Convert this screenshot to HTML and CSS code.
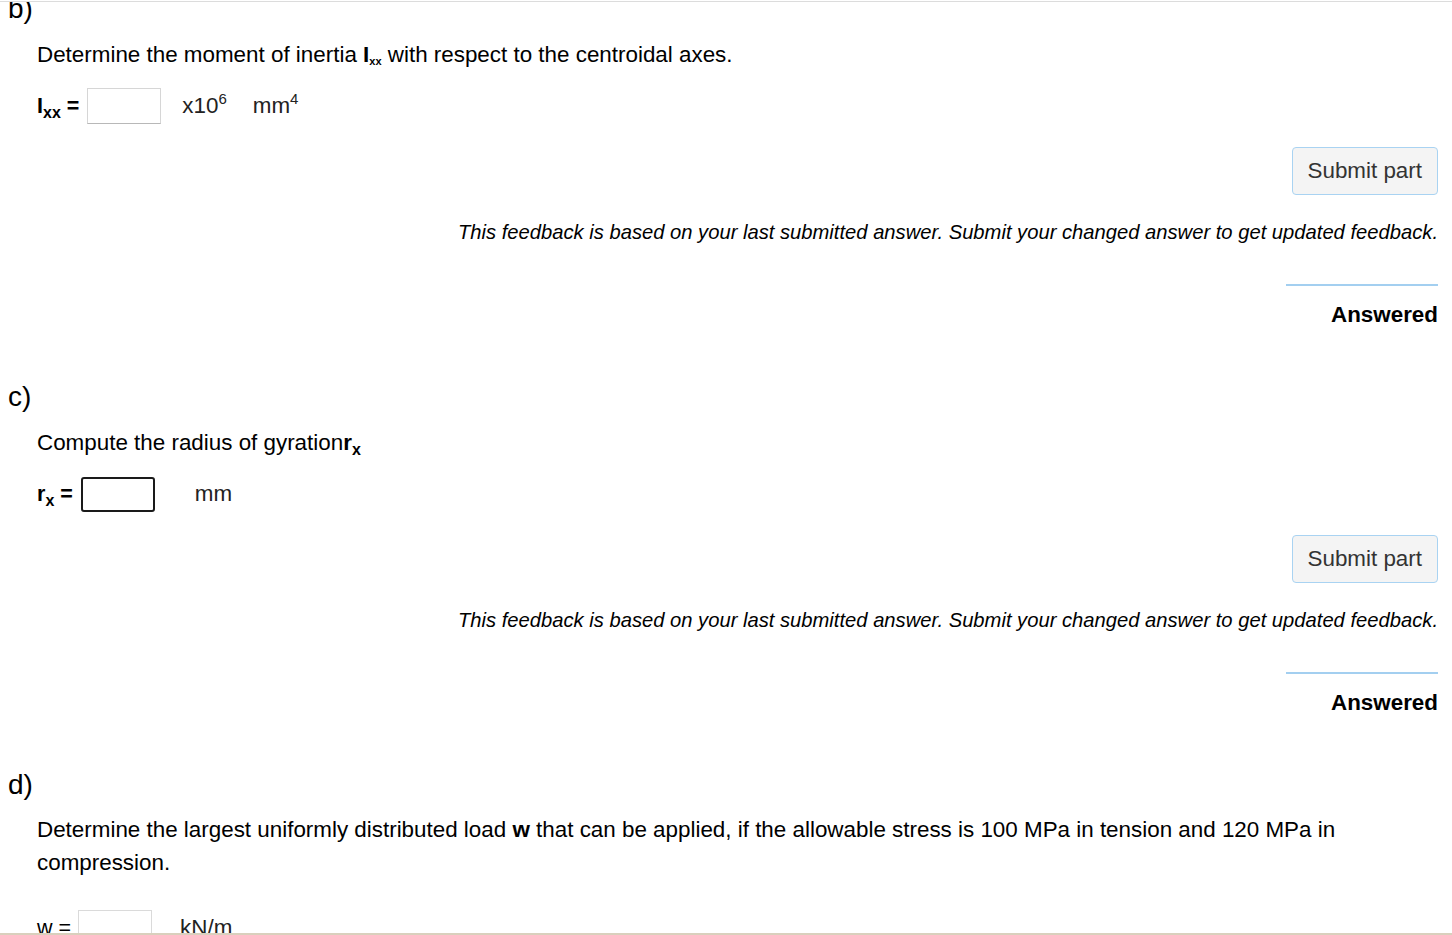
FILE: index.html
```html
<!DOCTYPE html>
<html>
<head>
<meta charset="utf-8">
<link rel="stylesheet" href="styles.css">
</head>
<body>
<div class="frame">
  <div class="page">
    <section class="part">
      <div class="part-label">b)</div>
      <div class="part-body">
        <p class="question">Determine the moment of inertia <b class="sym">I<sub class="tiny">xx</sub></b> with respect to the centroidal axes.</p>
        <div class="answer-row">
          <span class="var"><b>I<sub>xx</sub></b> <b>=</b></span>
          <span class="field"></span>
          <span class="unit u-b1">x10<sup>6</sup></span>
          <span class="unit u-b2">mm<sup>4</sup></span>
        </div>
      </div>
      <div class="actions">
        <button class="submit">Submit part</button>
        <p class="feedback">This feedback is based on your last submitted answer. Submit your changed answer to get updated feedback.</p>
        <div class="status"><span class="status-text">Answered</span></div>
      </div>
    </section>

    <section class="part">
      <div class="part-label">c)</div>
      <div class="part-body">
        <p class="question">Compute the radius of gyration<b>r<sub>x</sub></b></p>
        <div class="answer-row">
          <span class="var"><b>r<sub>x</sub></b> <b>=</b></span>
          <span class="field field-focus"></span>
          <span class="unit u-c1">mm</span>
        </div>
      </div>
      <div class="actions">
        <button class="submit">Submit part</button>
        <p class="feedback">This feedback is based on your last submitted answer. Submit your changed answer to get updated feedback.</p>
        <div class="status"><span class="status-text">Answered</span></div>
      </div>
    </section>

    <section class="part part-last">
      <div class="part-label">d)</div>
      <div class="part-body">
        <p class="question">Determine the largest uniformly distributed load <b>w</b> that can be applied, if the allowable stress is 100 MPa in tension and 120 MPa in compression.</p>
        <div class="answer-row row-d">
          <span class="var plain">w =</span>
          <span class="field"></span>
          <span class="unit u-d1">kN/m</span>
        </div>
      </div>
    </section>
  </div>
</div>
</body>
</html>
```

FILE: styles.css
```css
html, body {
  margin: 0;
  padding: 0;
  background: #fff;
}
body {
  padding-top: 1px;
  font-family: "Liberation Sans", Arial, sans-serif;
  color: #000;
}
.frame {
  height: 931px;
  overflow: hidden;
  border-top: 1px solid #dcdcdc;
  border-bottom: 2px solid #d9d0bd;
}
.page {
  margin-top: -8px;
  padding: 0 14px 0 8px;
}
sub, sup {
  line-height: 0;
  vertical-align: baseline;
  position: relative;
}
.part-label {
  font-size: 28px;
  line-height: 30px;
  height: 30px;
}
.part + .part .part-label {
  margin-top: 52px;
}
.part-last .question {
  margin-top: 13px;
}
.part-body {
  padding-left: 29px;
}
.question {
  margin: 14px 0 0;
  font-size: 22.4px;
  line-height: 33px;
}
.question .sym {
  font-weight: bold;
}
.question sub {
  font-size: 16px;
  top: 5px;
}
.question sub.tiny {
  font-size: 11px;
  top: 3px;
}
.answer-row {
  display: flex;
  align-items: center;
  height: 38px;
  margin-top: 16px;
  font-size: 21.5px;
}
.var b {
  font-weight: bold;
}
.var sub {
  font-size: 16px;
  top: 5px;
}
.var {
  white-space: pre;
}
.field {
  display: block;
  width: 72px;
  height: 34px;
  margin-left: 8px;
  border: 1px solid #d6d6d6;
  border-bottom-color: #b8b8b8;
  background: #fff;
}
.field-focus {
  border: 2px solid #1a1a1a;
  border-radius: 3px;
  width: 70px;
  height: 31px;
}
.unit {
  font-size: 22.4px;
  color: #222;
}
.unit sup {
  font-size: 15px;
  top: -9px;
}
.u-b1 { margin-left: 21px; }
.u-b2 { margin-left: 26px; }
.u-c1 { margin-left: 40px; }
.u-d1 { margin-left: 28px; }
.row-d {
  margin-top: 30px;
}
.row-d .field { margin-left: 7px; border-color: #dadada; }
.actions {
  display: flex;
  flex-direction: column;
  align-items: flex-end;
}
.submit {
  margin-top: 22px;
  height: 48px;
  padding: 0 15px;
  font-family: "Liberation Sans", Arial, sans-serif;
  font-size: 22.4px;
  color: #333;
  background: #f4f4f4;
  border: 1px solid #a9d3f2;
  border-radius: 4px;
}
.feedback {
  margin: 22px 0 0;
  font-size: 20.2px;
  line-height: 30px;
  font-style: italic;
}
.status {
  margin-top: 37px;
  width: 152px;
  border-top: 2px solid #a3cff0;
  text-align: right;
  padding-top: 14px;
}
.status-text {
  font-size: 22.4px;
  font-weight: bold;
  line-height: 30px;
}
```
